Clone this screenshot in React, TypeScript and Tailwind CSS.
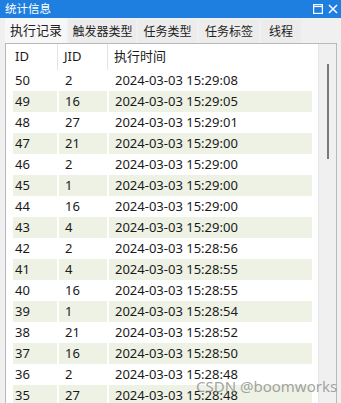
import React from 'react';

const rows: [string, string, string][] = [
  ['50', '2', '2024-03-03 15:29:08'],
  ['49', '16', '2024-03-03 15:29:05'],
  ['48', '27', '2024-03-03 15:29:01'],
  ['47', '21', '2024-03-03 15:29:00'],
  ['46', '2', '2024-03-03 15:29:00'],
  ['45', '1', '2024-03-03 15:29:00'],
  ['44', '16', '2024-03-03 15:29:00'],
  ['43', '4', '2024-03-03 15:29:00'],
  ['42', '2', '2024-03-03 15:28:56'],
  ['41', '4', '2024-03-03 15:28:55'],
  ['40', '16', '2024-03-03 15:28:55'],
  ['39', '1', '2024-03-03 15:28:54'],
  ['38', '21', '2024-03-03 15:28:52'],
  ['37', '16', '2024-03-03 15:28:50'],
  ['36', '2', '2024-03-03 15:28:48'],
  ['35', '27', '2024-03-03 15:28:48'],
];

const tabs = [
  { label: '触发器类型', w: 'w-[67px]' },
  { label: '任务类型', w: 'w-[59px]' },
  { label: '任务标签', w: 'w-[60px]' },
  { label: '线程', w: 'w-[40px]' },
];

export default function App() {
  return (
    <div
      className="relative w-[341px] h-[403px] overflow-hidden bg-[#f0f0f0] flex flex-col"
      style={{ fontFamily: '"Noto Sans", "Noto Sans CJK SC", sans-serif' }}
    >
      {/* Title bar */}
      <div className="h-[18px] shrink-0 bg-[#1f7fe1] flex items-center justify-between pl-[5px] pr-[3px]">
        <span className="text-[11.5px] leading-none text-white">统计信息</span>
        <div className="flex items-center gap-[5px] text-white">
          <svg width="10" height="10" viewBox="0 0 10 10" fill="none" stroke="currentColor" strokeWidth="1.2">
            <rect x="0.6" y="0.6" width="8.8" height="8.8" />
            <line x1="0.6" y1="2.5" x2="9.4" y2="2.5" />
          </svg>
          <svg width="10" height="10" viewBox="0 0 10 10" fill="none" stroke="currentColor" strokeWidth="1.4">
            <line x1="1" y1="1" x2="9" y2="9" />
            <line x1="9" y1="1" x2="1" y2="9" />
          </svg>
        </div>
      </div>

      {/* Tabs */}
      <div className="h-[25px] shrink-0 flex items-end pl-[5px] text-[12px] text-[#222]">
        <div className="h-[25px] w-[62px] flex items-center justify-center bg-[#f7f7f7] text-[13px] pt-[1px]">执行记录</div>
        {tabs.map((t) => (
          <div key={t.label} className={`h-[23px] ml-[2px] flex items-center justify-center bg-[#ececec] ${t.w}`}>
            {t.label}
          </div>
        ))}
      </div>

      {/* Table panel */}
      <div className="ml-[5px] mr-[4px] flex-1 flex border border-[#b9b9b9] bg-white">
        <div className="flex-1 flex flex-col pl-[7px] text-[13px] text-[#1a1a1a]">
          <div className="h-[26px] shrink-0 flex items-center">
            <div className="w-[45px] h-full pl-[2px] flex items-center border-r border-[#e4e4e4]">ID</div>
            <div className="w-[50px] h-full pl-[6px] flex items-center border-r border-[#e4e4e4]">JID</div>
            <div className="flex-1 pl-[6px] flex items-center">执行时间</div>
          </div>
          {rows.map((r, i) => {
            const bg = i % 2 === 1 ? 'bg-[#edf2e5]' : 'bg-white';
            return (
              <div key={r[0]} className="h-[21px] shrink-0 flex gap-[2px]">
                <div className={`w-[44px] pl-[2px] flex items-center ${bg}`}>{r[0]}</div>
                <div className={`w-[48px] pl-[6px] flex items-center ${bg}`}>{r[1]}</div>
                <div className={`w-[203px] pl-[6px] flex items-center ${bg}`}>{r[2]}</div>
              </div>
            );
          })}
        </div>

        {/* Scrollbar */}
        <div className="w-[18px] shrink-0 bg-[#f0f0f0] border-l border-[#e6e6e6] flex justify-center pt-[20px]">
          <div className="w-[2px] h-[95px] bg-[#7a7a7a]" />
        </div>
      </div>

      {/* Watermark */}
      <div className="absolute left-[196px] top-[379px] text-[15px] text-[#8c8c8c]/80 leading-none">
        CSDN @boomworks
      </div>
    </div>
  );
}
